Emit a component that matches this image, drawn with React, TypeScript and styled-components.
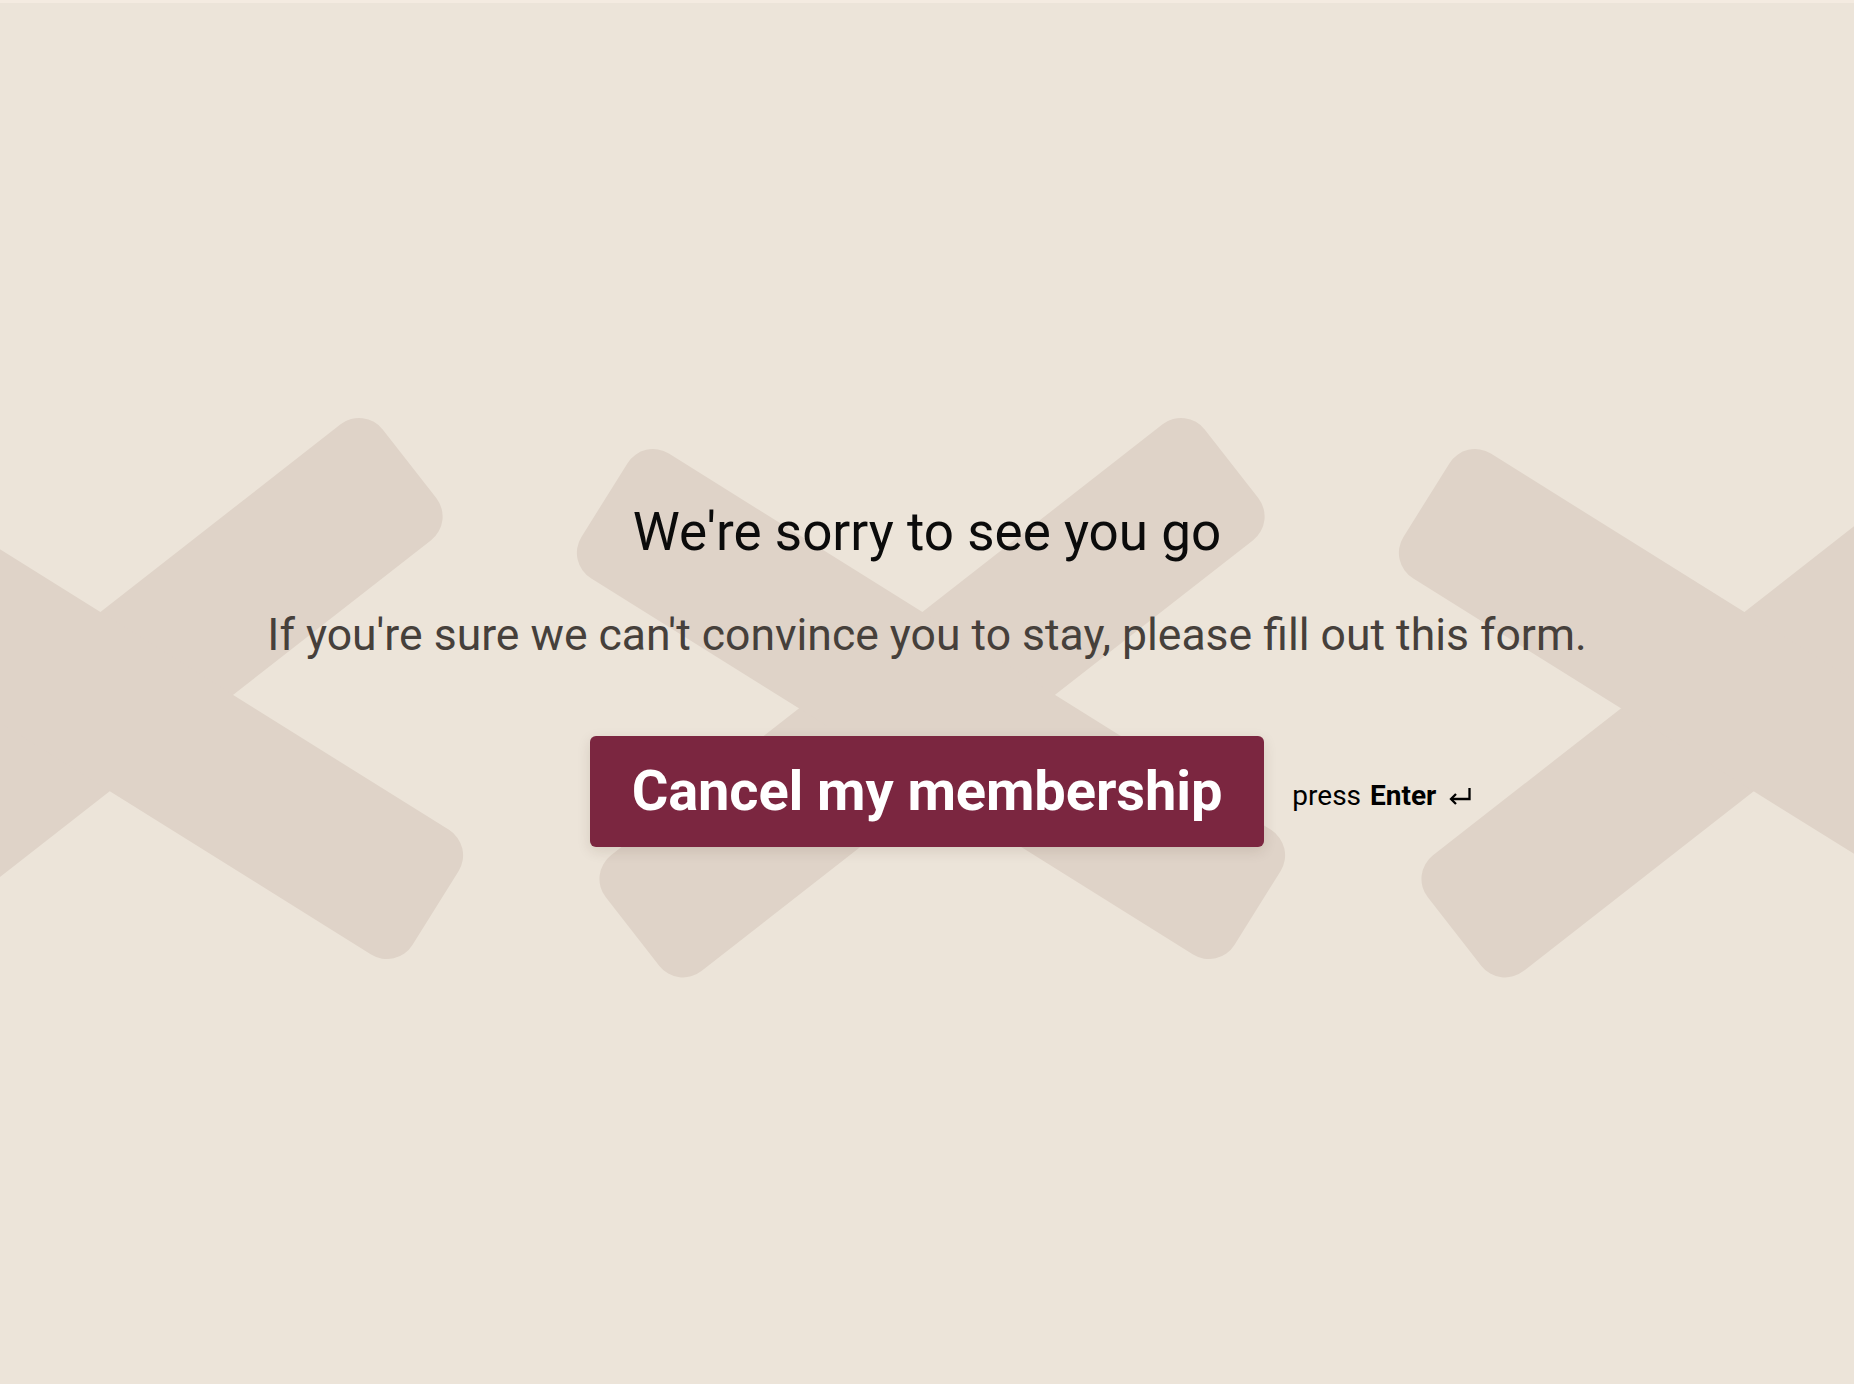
import styled, { createGlobalStyle } from "styled-components";

const GlobalStyle = createGlobalStyle`
  html, body {
    margin: 0;
    padding: 0;
  }
  body {
    background: #ece4d9;
    font-family: Roboto, Inter, "Liberation Sans", sans-serif;
    -webkit-font-smoothing: antialiased;
  }
`;

// centres of the brush crosses painted behind the form
const CROSSES = [105, 927, 1749];

function Cross({ cx, cy }: { cx: number; cy: number }) {
  return (
    <g transform={`translate(${cx} ${cy})`}>
      <rect x={-374} y={-73} width={760} height={147} rx={30} transform="rotate(-38)" />
      <rect x={-380} y={-73} width={770} height={147} rx={30} transform="rotate(32)" />
    </g>
  );
}

function Backdrop() {
  return (
    <BackdropSvg viewBox="0 0 1854 1384" preserveAspectRatio="xMidYMid slice">
      <g fill="#dfd3c8">
        {CROSSES.map(x => (
          <Cross key={x} cx={x} cy={698} />
        ))}
      </g>
    </BackdropSvg>
  );
}

function EnterIcon() {
  return (
    <svg width="24" height="20" viewBox="0 0 24 20" fill="none" stroke="currentColor" strokeWidth="2.3">
      <path d="M21.5 2v11H3" />
      <path d="M8 8 3 13l5 5" />
    </svg>
  );
}

export default function App() {
  return (
    <>
      <GlobalStyle />
      <Page>
        <TopBar />
        <Stage>
          <Backdrop />
          <Content>
            <Title>We're sorry to see you go</Title>
            <Lead>If you're sure we can't convince you to stay, please fill out this form.</Lead>
            <ActionRow>
              <CancelButton type="button">Cancel my membership</CancelButton>
              <Hint>
                press <strong>Enter</strong>
                <EnterIcon />
              </Hint>
            </ActionRow>
          </Content>
        </Stage>
      </Page>
    </>
  );
}

const Page = styled.div`
  display: flex;
  flex-direction: column;
  min-height: 100vh;
  background: #ece4d9;
  overflow: hidden;
`;

const TopBar = styled.div`
  height: 3px;
  background: #f4ebe1;
`;

const Stage = styled.div`
  flex: 1;
  display: grid;
  & > * {
    grid-area: 1 / 1;
  }
`;

const BackdropSvg = styled.svg`
  width: 100%;
  height: 100%;
  display: block;
`;

const Content = styled.main`
  display: flex;
  flex-direction: column;
  align-items: center;
  justify-content: center;
  padding-bottom: 40px;
  text-align: center;
`;

const Title = styled.h1`
  margin: 0;
  font-size: 53px;
  line-height: 58px;
  font-weight: 400;
  color: #0b0b0b;
`;

const Lead = styled.p`
  margin: 50px 0 0;
  font-size: 44.5px;
  line-height: 49px;
  font-weight: 400;
  color: #46403b;
`;

const ActionRow = styled.div`
  margin-top: 76px;
  width: 100%;
  display: grid;
  grid-template-columns: 1fr auto 1fr;
  align-items: center;
`;

const CancelButton = styled.button`
  grid-column: 2;
  border: 0;
  border-radius: 6px;
  padding: 23px 42px 24px;
  background: #7b2640;
  color: #ffffff;
  font-family: inherit;
  font-size: 56px;
  line-height: 64px;
  font-weight: 700;
  letter-spacing: -0.1px;
  box-shadow: 0 4px 14px rgba(60, 30, 20, 0.12);
  cursor: pointer;
`;

const Hint = styled.div`
  grid-column: 3;
  justify-self: start;
  display: flex;
  align-items: center;
  gap: 12px;
  margin: 8px 0 0 28px;
  font-size: 28px;
  color: #000000;

  & > strong {
    font-weight: 700;
    margin-left: -3px;
  }
`;
